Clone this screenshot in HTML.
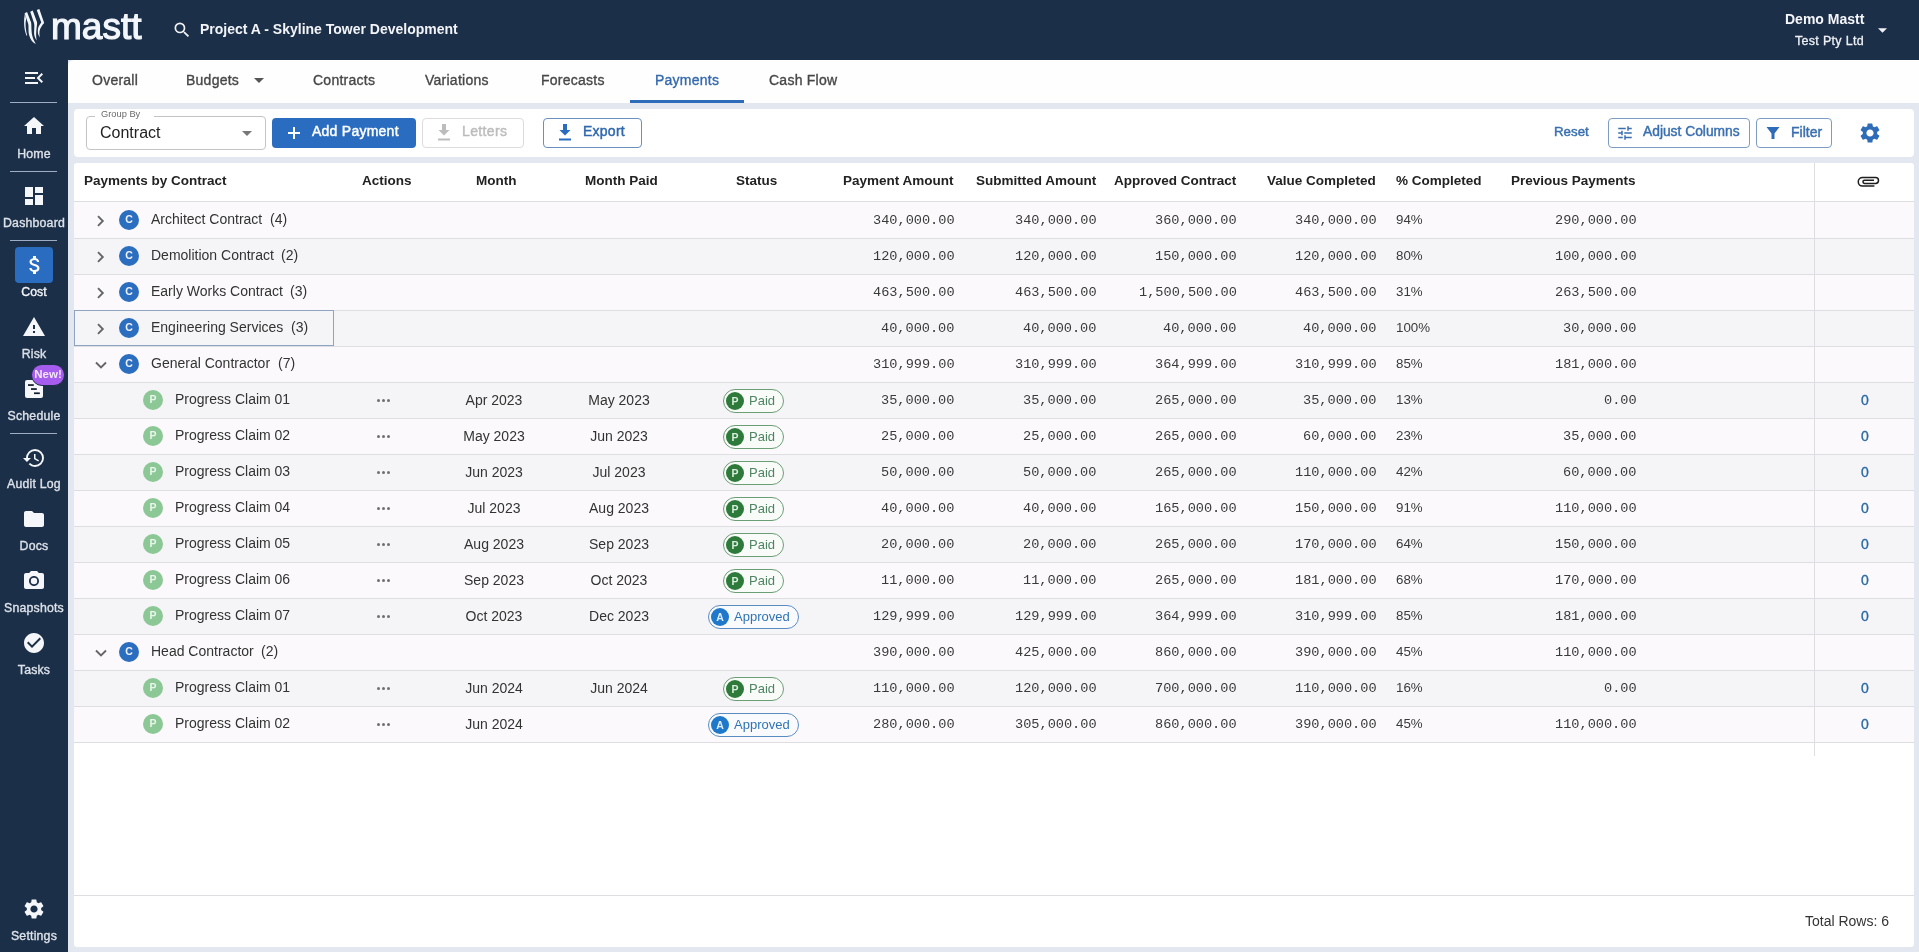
<!DOCTYPE html>
<html><head><meta charset="utf-8"><title>Payments</title>
<style>
html,body{margin:0;padding:0}
body{width:1919px;height:952px;overflow:hidden;position:relative;background:#e2e7f0;font-family:'Liberation Sans', sans-serif}
.t{position:absolute;white-space:nowrap;will-change:transform}
.b{position:absolute;box-sizing:border-box}
svg.b{display:block}
</style></head><body>
<div class="b" style="left:0px;top:0px;width:1919px;height:60px;background:#1c2f48"></div>
<div class="b" style="left:0px;top:60px;width:68px;height:892px;background:#1c2f48"></div>
<svg class="b" style="left:20px;top:6px" width="30" height="42" viewBox="0 0 680 952" fill="#f3f6fb">
<path d="M105 165 L160 138 L250 370 C265 420 250 560 280 680 C300 760 330 810 360 860 C290 830 230 760 205 650 C185 560 200 450 185 400 Z"/>
<path d="M112 170 C80 330 85 530 150 675 L165 665 C120 520 120 360 140 300 Z"/>
<path d="M232 130 L288 100 L385 360 C395 400 372 500 367 600 C362 680 370 730 377 780 C330 720 315 650 320 580 C325 480 330 420 315 380 Z"/>
<path d="M380 92 L438 66 L548 385 C500 440 452 500 442 580 C437 640 445 680 452 712 C405 660 400 600 405 540 C410 470 450 420 482 375 Z"/>
</svg>
<div class="t" style="top:2.67px;font-size:37px;line-height:48px;font-weight:400;color:#f3f6fb;font-family:'Liberation Sans', sans-serif;-webkit-text-stroke:1.2px #f3f6fb;left:50.5px;">mastt</div>
<svg class="b" style="left:172px;top:20px" width="20" height="20" viewBox="0 0 24 24"><path fill="#f0f2f6" d="M15.5 14h-.79l-.28-.27A6.47 6.47 0 0 0 16 9.5 6.5 6.5 0 1 0 9.5 16c1.61 0 3.09-.59 4.23-1.57l.27.28v.79l5 4.99L20.49 19l-4.99-5zm-6 0C7.01 14 5 11.99 5 9.5S7.01 5 9.5 5 14 7.01 14 9.5 11.99 14 9.5 14z"/></svg>
<div class="t" style="top:20.15px;font-size:14px;line-height:18px;font-weight:700;color:#f2f4f8;font-family:'Liberation Sans', sans-serif;left:200px;">Project A - Skyline Tower Development</div>
<div class="t" style="top:10.15px;font-size:14px;line-height:18px;font-weight:700;color:#f4f6fa;font-family:'Liberation Sans', sans-serif;right:55px;">Demo Mastt</div>
<div class="t" style="top:33.17px;font-size:12.5px;line-height:16px;font-weight:400;color:#eef1f6;font-family:'Liberation Sans', sans-serif;-webkit-text-stroke:0.3px #eef1f6;letter-spacing:0.3px;right:55px;">Test Pty Ltd</div>
<svg class="b" style="left:1877.5px;top:27.5px" width="9" height="5" viewBox="0 0 10 5"><path d="M0 0h10L5 5z" fill="#f0f2f6"/></svg>
<svg class="b" style="left:22px;top:66px" width="24" height="24" viewBox="0 0 24 24"><path fill="#f4f6fa" d="M3 18h13v-2H3v2zm0-5h10v-2H3v2zm0-7v2h13V6H3zm18 9.59L17.42 12 21 8.41 19.59 7l-5 5 5 5L21 15.59z"/></svg>
<div class="b" style="left:10px;top:102px;width:47px;height:1px;background:#9eadc4"></div>
<div class="b" style="left:10px;top:171px;width:47px;height:1px;background:#9eadc4"></div>
<div class="b" style="left:10px;top:240px;width:47px;height:1px;background:#9eadc4"></div>
<div class="b" style="left:10px;top:433px;width:47px;height:1px;background:#9eadc4"></div>
<svg class="b" style="left:22px;top:114px" width="24" height="24" viewBox="0 0 24 24" fill="#f4f6fa"><path d="M10 20v-6h4v6h5v-8h3L12 3 2 12h3v8z"/></svg>
<div class="t" style="top:145.74px;font-size:12.3px;line-height:16px;font-weight:400;color:#dde2ea;font-family:'Liberation Sans', sans-serif;-webkit-text-stroke:0.35px #dde2ea;letter-spacing:0.2px;left:-266px;width:600px;text-align:center;">Home</div>
<svg class="b" style="left:22px;top:184px" width="24" height="24" viewBox="0 0 24 24" fill="#f4f6fa"><path d="M3 13h8V3H3v10zm0 8h8v-6H3v6zm10 0h8V11h-8v10zm0-18v6h8V3h-8z"/></svg>
<div class="t" style="top:215.24px;font-size:12.3px;line-height:16px;font-weight:400;color:#dde2ea;font-family:'Liberation Sans', sans-serif;-webkit-text-stroke:0.35px #dde2ea;letter-spacing:0.2px;left:-266px;width:600px;text-align:center;">Dashboard</div>
<div class="b" style="left:15px;top:247px;width:38px;height:36px;background:#2a6cbf;border-radius:4px"></div>
<svg class="b" style="left:23px;top:253px" width="24" height="24" viewBox="0 0 24 24"><path fill="#fff" d="M11.8 10.9c-2.27-.59-3-1.2-3-2.15 0-1.09 1.01-1.850 2.7-1.85 1.78 0 2.44.85 2.5 2.1h2.21c-.07-1.72-1.12-3.3-3.21-3.81V3h-3v2.16c-1.94.42-3.5 1.68-3.5 3.61 0 2.31 1.91 3.46 4.7 4.13 2.5.6 3 1.48 3 2.410 0 .69-.49 1.79-2.7 1.79-2.06 0-2.87-.92-2.98-2.1h-2.2c.12 2.19 1.76 3.42 3.68 3.830V21h3v-2.15c1.95-.37 3.5-1.5 3.5-3.55 0-2.84-2.43-3.81-4.7-4.4z"/></svg>
<div class="t" style="top:283.74px;font-size:12.3px;line-height:16px;font-weight:400;color:#f4f6fa;font-family:'Liberation Sans', sans-serif;-webkit-text-stroke:0.35px #f4f6fa;left:-266px;width:600px;text-align:center;">Cost</div>
<svg class="b" style="left:22px;top:315px" width="24" height="24" viewBox="0 0 24 24" fill="#f4f6fa"><path d="M1 21h22L12 2 1 21zm12-3h-2v-2h2v2zm0-4h-2v-4h2v4z"/></svg>
<div class="t" style="top:345.74px;font-size:12.3px;line-height:16px;font-weight:400;color:#dde2ea;font-family:'Liberation Sans', sans-serif;-webkit-text-stroke:0.35px #dde2ea;letter-spacing:0.2px;left:-266px;width:600px;text-align:center;">Risk</div>
<svg class="b" style="left:25px;top:380px" width="18" height="18" viewBox="0 0 18 18"><rect x="0" y="0" width="18" height="18" rx="2" fill="#f4f6fa"/><rect x="3" y="4.2" width="5.8" height="1.7" fill="#111a28"/><rect x="6" y="8.2" width="5.8" height="1.7" fill="#111a28"/><rect x="9" y="12.4" width="5.8" height="1.7" fill="#111a28"/></svg>
<div class="b" style="left:31px;top:364px;width:34px;height:22px;background:#a65ded;border-radius:11px;border:1.5px solid #1c2f48"></div>
<div class="t" style="top:366.81px;font-size:11.5px;line-height:15px;font-weight:700;color:#f3e6fb;font-family:'Liberation Sans', sans-serif;left:-252px;width:600px;text-align:center;">New!</div>
<div class="t" style="top:408.04px;font-size:12.3px;line-height:16px;font-weight:400;color:#dde2ea;font-family:'Liberation Sans', sans-serif;-webkit-text-stroke:0.35px #dde2ea;letter-spacing:0.2px;left:-266px;width:600px;text-align:center;">Schedule</div>
<svg class="b" style="left:22px;top:446px" width="24" height="24" viewBox="0 0 24 24" fill="#f4f6fa"><path d="M13 3a9 9 0 0 0-9 9H1l3.89 3.89.07.14L9 12H6c0-3.87 3.13-7 7-7s7 3.13 7 7-3.13 7-7 7c-1.93 0-3.68-.79-4.94-2.06l-1.42 1.42A8.954 8.954 0 0 0 13 21a9 9 0 0 0 0-18zm-1 5v5l4.28 2.54.72-1.21-3.5-2.08V8H12z"/></svg>
<div class="t" style="top:476.44px;font-size:12.3px;line-height:16px;font-weight:400;color:#dde2ea;font-family:'Liberation Sans', sans-serif;-webkit-text-stroke:0.35px #dde2ea;letter-spacing:0.2px;left:-266px;width:600px;text-align:center;">Audit Log</div>
<svg class="b" style="left:22px;top:507px" width="24" height="24" viewBox="0 0 24 24" fill="#f4f6fa"><path d="M10 4H4c-1.1 0-1.99.9-1.99 2L2 18c0 1.1.9 2 2 2h16c1.1 0 2-.9 2-2V8c0-1.1-.9-2-2-2h-8l-2-2z"/></svg>
<div class="t" style="top:537.74px;font-size:12.3px;line-height:16px;font-weight:400;color:#dde2ea;font-family:'Liberation Sans', sans-serif;-webkit-text-stroke:0.35px #dde2ea;letter-spacing:0.2px;left:-266px;width:600px;text-align:center;">Docs</div>
<svg class="b" style="left:22px;top:568px" width="24" height="24" viewBox="0 0 24 24" fill="#f4f6fa"><path d="M20 5h-3.17L15 3H9L7.17 5H4c-1.1 0-2 .9-2 2v12c0 1.1.9 2 2 2h16c1.1 0 2-.9 2-2V7c0-1.1-.9-2-2-2zm-8 13c-2.76 0-5-2.24-5-5s2.24-5 5-5 5 2.24 5 5-2.24 5-5 5z"/><circle cx="12" cy="13" r="3.2"/></svg>
<div class="t" style="top:600.24px;font-size:12.3px;line-height:16px;font-weight:400;color:#dde2ea;font-family:'Liberation Sans', sans-serif;-webkit-text-stroke:0.35px #dde2ea;letter-spacing:0.2px;left:-266px;width:600px;text-align:center;">Snapshots</div>
<svg class="b" style="left:22px;top:631px" width="24" height="24" viewBox="0 0 24 24" fill="#f4f6fa"><path d="M12 2C6.48 2 2 6.48 2 12s4.48 10 10 10 10-4.48 10-10S17.52 2 12 2zm-2 15l-5-5 1.41-1.41L10 14.17l7.59-7.59L19 8l-9 9z"/></svg>
<div class="t" style="top:662.24px;font-size:12.3px;line-height:16px;font-weight:400;color:#dde2ea;font-family:'Liberation Sans', sans-serif;-webkit-text-stroke:0.35px #dde2ea;letter-spacing:0.2px;left:-266px;width:600px;text-align:center;">Tasks</div>
<svg class="b" style="left:22px;top:897px" width="24" height="24" viewBox="0 0 24 24" fill="#f4f6fa"><path d="M19.14 12.94c.04-.3.06-.61.06-.94 0-.32-.02-.64-.07-.94l2.03-1.58a.49.49 0 0 0 .12-.61l-1.92-3.32a.488.488 0 0 0-.59-.22l-2.39.96c-.5-.38-1.03-.7-1.62-.94l-.36-2.54a.484.484 0 0 0-.48-.41h-3.84c-.24 0-.43.17-.47.41l-.36 2.54c-.59.24-1.13.57-1.62.94l-2.39-.96c-.22-.08-.47 0-.59.22L2.74 8.87c-.12.21-.08.47.12.61l2.03 1.58c-.05.3-.09.63-.09.94s.02.64.07.94l-2.03 1.58a.49.49 0 0 0-.12.61l1.92 3.32c.12.22.37.29.59.22l2.39-.96c.5.38 1.03.7 1.62.94l.36 2.54c.05.24.24.41.48.41h3.84c.24 0 .44-.17.47-.41l.36-2.54c.59-.24 1.13-.56 1.62-.94l2.39.96c.22.08.47 0 .59-.22l1.92-3.32c.12-.22.07-.47-.12-.61l-2.01-1.58zM12 15.6c-1.98 0-3.6-1.62-3.6-3.6s1.62-3.6 3.6-3.6 3.6 1.62 3.6 3.6-1.62 3.6-3.6 3.6z"/></svg>
<div class="t" style="top:928.14px;font-size:12.3px;line-height:16px;font-weight:400;color:#dde2ea;font-family:'Liberation Sans', sans-serif;-webkit-text-stroke:0.35px #dde2ea;letter-spacing:0.2px;left:-266px;width:600px;text-align:center;">Settings</div>
<div class="b" style="left:68px;top:60px;width:1851px;height:43px;background:#fefefe;border-top-left-radius:6px"></div>
<div class="t" style="top:71.15px;font-size:14px;line-height:18px;font-weight:400;color:#474747;font-family:'Liberation Sans', sans-serif;-webkit-text-stroke:0.35px #474747;letter-spacing:0.25px;left:92px;">Overall</div>
<div class="t" style="top:71.15px;font-size:14px;line-height:18px;font-weight:400;color:#474747;font-family:'Liberation Sans', sans-serif;-webkit-text-stroke:0.35px #474747;letter-spacing:0.25px;left:186px;">Budgets</div>
<div class="t" style="top:71.15px;font-size:14px;line-height:18px;font-weight:400;color:#474747;font-family:'Liberation Sans', sans-serif;-webkit-text-stroke:0.35px #474747;letter-spacing:0.25px;left:312.5px;">Contracts</div>
<div class="t" style="top:71.15px;font-size:14px;line-height:18px;font-weight:400;color:#474747;font-family:'Liberation Sans', sans-serif;-webkit-text-stroke:0.35px #474747;letter-spacing:0.25px;left:425px;">Variations</div>
<div class="t" style="top:71.15px;font-size:14px;line-height:18px;font-weight:400;color:#474747;font-family:'Liberation Sans', sans-serif;-webkit-text-stroke:0.35px #474747;letter-spacing:0.25px;left:541px;">Forecasts</div>
<div class="t" style="top:71.15px;font-size:14px;line-height:18px;font-weight:400;color:#474747;font-family:'Liberation Sans', sans-serif;-webkit-text-stroke:0.35px #474747;letter-spacing:0.25px;left:768.5px;">Cash Flow</div>
<svg class="b" style="left:254px;top:78px" width="10" height="5" viewBox="0 0 10 5"><path d="M0 0h10L5 5z" fill="#555"/></svg>
<div class="t" style="top:71.15px;font-size:14px;line-height:18px;font-weight:400;color:#3469ad;font-family:'Liberation Sans', sans-serif;-webkit-text-stroke:0.35px #3469ad;letter-spacing:0.25px;left:654.5px;">Payments</div>
<div class="b" style="left:630px;top:100px;width:114px;height:3px;background:#2c6cb9"></div>
<div class="b" style="left:74px;top:109px;width:1840px;height:48px;background:#fff;border-radius:4px"></div>
<div class="b" style="left:86px;top:116px;width:180px;height:34px;border:1px solid #c4c4c4;border-radius:4px"></div>
<div class="b" style="left:95px;top:112px;width:59px;height:8px;background:#fff"></div>
<div class="t" style="top:108.08px;font-size:9.3px;line-height:12px;font-weight:400;color:#6a6a6a;font-family:'Liberation Sans', sans-serif;left:100.5px;">Group By</div>
<div class="t" style="top:121.65px;font-size:16px;line-height:21px;font-weight:400;color:#222;font-family:'Liberation Sans', sans-serif;left:100px;">Contract</div>
<svg class="b" style="left:242px;top:131px" width="10" height="5" viewBox="0 0 10 5"><path d="M0 0h10L5 5z" fill="#777"/></svg>
<div class="b" style="left:272px;top:118px;width:144px;height:30px;background:#2a6cbf;border-radius:4px"></div>
<svg class="b" style="left:287px;top:126px" width="14" height="14" viewBox="0 0 14 14"><path d="M6 1h2v5h5v2H8v5H6V8H1V6h5z" fill="#fff"/></svg>
<div class="t" style="top:122.25px;font-size:14px;line-height:18px;font-weight:400;color:#fff;font-family:'Liberation Sans', sans-serif;-webkit-text-stroke:0.45px #fff;letter-spacing:0.25px;left:312px;">Add Payment</div>
<div class="b" style="left:422px;top:118px;width:102px;height:30px;border:1px solid #dcdcdc;border-radius:4px;box-sizing:border-box"></div>
<svg class="b" style="left:437px;top:124px" width="14" height="17" viewBox="0 0 14 17"><path d="M5 0h4v6h3.5L7 11.5 1.5 6H5z M1 14.5h12v2H1z" fill="#bdbdbd"/></svg>
<div class="t" style="top:122.25px;font-size:14px;line-height:18px;font-weight:400;color:#bcbcbc;font-family:'Liberation Sans', sans-serif;-webkit-text-stroke:0.45px #bcbcbc;letter-spacing:0.35px;left:462px;">Letters</div>
<div class="b" style="left:543px;top:118px;width:99px;height:30px;border:1px solid #6b8fbf;border-radius:4px;box-sizing:border-box"></div>
<svg class="b" style="left:558px;top:124px" width="14" height="17" viewBox="0 0 14 17"><path d="M5 0h4v6h3.5L7 11.5 1.5 6H5z M1 14.5h12v2H1z" fill="#2a6cbf"/></svg>
<div class="t" style="top:122.25px;font-size:14px;line-height:18px;font-weight:400;color:#3068ad;font-family:'Liberation Sans', sans-serif;-webkit-text-stroke:0.45px #3068ad;letter-spacing:0.25px;left:583px;">Export</div>
<div class="t" style="top:122.99px;font-size:13.3px;line-height:17px;font-weight:400;color:#3a70b0;font-family:'Liberation Sans', sans-serif;-webkit-text-stroke:0.45px #3a70b0;left:1553.5px;">Reset</div>
<div class="b" style="left:1608px;top:118px;width:142px;height:30px;border:1px solid #7d9cc4;border-radius:4px;box-sizing:border-box"></div>
<svg class="b" style="left:1616px;top:124px" width="18" height="18" viewBox="0 0 24 24"><path fill="#3a6fb0" d="M3 17v2h6v-2H3zM3 5v2h10V5H3zm10 16v-2h8v-2h-8v-2h-2v6h2zM7 9v2H3v2h4v2h2V9H7zm14 4v-2H11v2h10zm-6-4h2V7h4V5h-4V3h-2v6z"/></svg>
<div class="t" style="top:123.32px;font-size:13.8px;line-height:18px;font-weight:400;color:#3a6fb0;font-family:'Liberation Sans', sans-serif;-webkit-text-stroke:0.45px #3a6fb0;left:1643px;">Adjust Columns</div>
<div class="b" style="left:1756px;top:118px;width:76px;height:30px;border:1px solid #7d9cc4;border-radius:4px;box-sizing:border-box"></div>
<svg class="b" style="left:1766px;top:126px" width="14" height="14" viewBox="0 0 14 14"><path d="M0.5 1h13L8.5 7.5V13h-3V7.5z" fill="#2f6cb8"/></svg>
<div class="t" style="top:122.95px;font-size:14px;line-height:18px;font-weight:400;color:#3a6fb0;font-family:'Liberation Sans', sans-serif;-webkit-text-stroke:0.45px #3a6fb0;left:1790.5px;">Filter</div>
<svg class="b" style="left:1858px;top:121px" width="24" height="24" viewBox="0 0 24 24" fill="#2f6cb8"><path d="M19.14 12.94c.04-.3.06-.61.06-.94 0-.32-.02-.64-.07-.94l2.03-1.58a.49.49 0 0 0 .12-.61l-1.92-3.32a.488.488 0 0 0-.59-.22l-2.39.96c-.5-.38-1.03-.7-1.62-.94l-.36-2.54a.484.484 0 0 0-.48-.41h-3.84c-.24 0-.43.17-.47.41l-.36 2.54c-.59.24-1.13.57-1.62.94l-2.39-.96c-.22-.08-.47 0-.59.22L2.74 8.87c-.12.21-.08.47.12.61l2.03 1.58c-.05.3-.09.63-.09.94s.02.64.07.94l-2.03 1.58a.49.49 0 0 0-.12.61l1.92 3.32c.12.22.37.29.59.22l2.39-.96c.5.38 1.03.7 1.62.94l.36 2.54c.05.24.24.41.48.41h3.84c.24 0 .44-.17.47-.41l.36-2.54c.59-.24 1.13-.56 1.62-.94l2.39.96c.22.08.47 0 .59-.22l1.92-3.32c.12-.22.07-.47-.12-.61l-2.01-1.58zM12 15.6c-1.98 0-3.6-1.62-3.6-3.6s1.62-3.6 3.6-3.6 3.6 1.62 3.6 3.6-1.62 3.6-3.6 3.6z"/></svg>
<div class="b" style="left:74px;top:163px;width:1840px;height:784px;background:#fff;border-radius:3px"></div>
<div class="b" style="left:74px;top:201px;width:1840px;height:1px;background:#dedde2"></div>
<div class="t" style="top:172.32px;font-size:13.5px;line-height:18px;font-weight:700;color:#222;font-family:'Liberation Sans', sans-serif;left:84px;">Payments by Contract</div>
<div class="t" style="top:172.32px;font-size:13.5px;line-height:18px;font-weight:700;color:#222;font-family:'Liberation Sans', sans-serif;left:362px;">Actions</div>
<div class="t" style="top:172.32px;font-size:13.5px;line-height:18px;font-weight:700;color:#222;font-family:'Liberation Sans', sans-serif;left:476px;">Month</div>
<div class="t" style="top:172.32px;font-size:13.5px;line-height:18px;font-weight:700;color:#222;font-family:'Liberation Sans', sans-serif;left:585px;">Month Paid</div>
<div class="t" style="top:172.32px;font-size:13.5px;line-height:18px;font-weight:700;color:#222;font-family:'Liberation Sans', sans-serif;left:736px;">Status</div>
<div class="t" style="top:172.32px;font-size:13.5px;line-height:18px;font-weight:700;color:#222;font-family:'Liberation Sans', sans-serif;right:965px;">Payment Amount</div>
<div class="t" style="top:172.32px;font-size:13.5px;line-height:18px;font-weight:700;color:#222;font-family:'Liberation Sans', sans-serif;right:823px;">Submitted Amount</div>
<div class="t" style="top:172.32px;font-size:13.5px;line-height:18px;font-weight:700;color:#222;font-family:'Liberation Sans', sans-serif;right:683px;">Approved Contract</div>
<div class="t" style="top:172.32px;font-size:13.5px;line-height:18px;font-weight:700;color:#222;font-family:'Liberation Sans', sans-serif;right:543px;">Value Completed</div>
<div class="t" style="top:172.32px;font-size:13.5px;line-height:18px;font-weight:700;color:#222;font-family:'Liberation Sans', sans-serif;left:1396px;">% Completed</div>
<div class="t" style="top:172.32px;font-size:13.5px;line-height:18px;font-weight:700;color:#222;font-family:'Liberation Sans', sans-serif;right:283px;">Previous Payments</div>
<svg class="b" style="left:1857px;top:176px" width="23" height="12" viewBox="1857 176 23 12"><path d="M1874.4 186.1H1862.5A4.25 4.25 0 0 1 1862.5 177.6H1875.6A2.9 2.9 0 0 1 1875.6 183.4H1864.5A1.55 1.55 0 0 1 1864.5 180.3H1874" fill="none" stroke="#1e1e1e" stroke-width="1.5"/></svg>
<div class="b" style="left:74px;top:202px;width:1840px;height:36px;background:#fbf9fc"></div>
<div class="b" style="left:74px;top:238px;width:1840px;height:1px;background:#dedde2"></div>
<svg class="b" style="left:96px;top:215px" width="10" height="12" viewBox="0 0 10 12"><path d="M2 1.2 L6.8 6 L2 10.8" stroke="#666" stroke-width="1.9" fill="none"/></svg>
<div class="b" style="left:119px;top:210px;width:20px;height:20px;background:#2b6dbf;border-radius:50%"></div>
<div class="t" style="top:212.36px;font-size:10.5px;line-height:14px;font-weight:700;color:#eef3fb;font-family:'Liberation Sans', sans-serif;left:-171px;width:600px;text-align:center;">C</div>
<div class="t" style="top:210.15px;font-size:14px;line-height:18px;font-weight:400;color:#333;font-family:'Liberation Sans', sans-serif;left:151px;">Architect Contract</div>
<div class="t" style="top:210.15px;font-size:14px;line-height:18px;font-weight:400;color:#333;font-family:'Liberation Sans', sans-serif;left:269.76171875px;">(4)</div>
<div class="t" style="top:211.88px;font-size:13.6px;line-height:18px;font-weight:400;color:#3a3a3a;font-family:'Liberation Mono', monospace;right:964.5px;">340,000.00</div>
<div class="t" style="top:211.88px;font-size:13.6px;line-height:18px;font-weight:400;color:#3a3a3a;font-family:'Liberation Mono', monospace;right:822.5px;">340,000.00</div>
<div class="t" style="top:211.88px;font-size:13.6px;line-height:18px;font-weight:400;color:#3a3a3a;font-family:'Liberation Mono', monospace;right:682.5px;">360,000.00</div>
<div class="t" style="top:211.88px;font-size:13.6px;line-height:18px;font-weight:400;color:#3a3a3a;font-family:'Liberation Mono', monospace;right:542.5px;">340,000.00</div>
<div class="t" style="top:211.88px;font-size:13.6px;line-height:18px;font-weight:400;color:#3a3a3a;font-family:'Liberation Mono', monospace;right:282.5px;">290,000.00</div>
<div class="t" style="top:210.89px;font-size:13.3px;line-height:17px;font-weight:400;color:#3a3a3a;font-family:'Liberation Sans', sans-serif;left:1396px;">94%</div>
<div class="b" style="left:74px;top:239px;width:1840px;height:35px;background:#f5f4f7"></div>
<div class="b" style="left:74px;top:274px;width:1840px;height:1px;background:#dedde2"></div>
<svg class="b" style="left:96px;top:251px" width="10" height="12" viewBox="0 0 10 12"><path d="M2 1.2 L6.8 6 L2 10.8" stroke="#666" stroke-width="1.9" fill="none"/></svg>
<div class="b" style="left:119px;top:246px;width:20px;height:20px;background:#2b6dbf;border-radius:50%"></div>
<div class="t" style="top:248.36px;font-size:10.5px;line-height:14px;font-weight:700;color:#eef3fb;font-family:'Liberation Sans', sans-serif;left:-171px;width:600px;text-align:center;">C</div>
<div class="t" style="top:246.15px;font-size:14px;line-height:18px;font-weight:400;color:#333;font-family:'Liberation Sans', sans-serif;left:151px;">Demolition Contract</div>
<div class="t" style="top:246.15px;font-size:14px;line-height:18px;font-weight:400;color:#333;font-family:'Liberation Sans', sans-serif;left:281.4375px;">(2)</div>
<div class="t" style="top:247.88px;font-size:13.6px;line-height:18px;font-weight:400;color:#3a3a3a;font-family:'Liberation Mono', monospace;right:964.5px;">120,000.00</div>
<div class="t" style="top:247.88px;font-size:13.6px;line-height:18px;font-weight:400;color:#3a3a3a;font-family:'Liberation Mono', monospace;right:822.5px;">120,000.00</div>
<div class="t" style="top:247.88px;font-size:13.6px;line-height:18px;font-weight:400;color:#3a3a3a;font-family:'Liberation Mono', monospace;right:682.5px;">150,000.00</div>
<div class="t" style="top:247.88px;font-size:13.6px;line-height:18px;font-weight:400;color:#3a3a3a;font-family:'Liberation Mono', monospace;right:542.5px;">120,000.00</div>
<div class="t" style="top:247.88px;font-size:13.6px;line-height:18px;font-weight:400;color:#3a3a3a;font-family:'Liberation Mono', monospace;right:282.5px;">100,000.00</div>
<div class="t" style="top:246.89px;font-size:13.3px;line-height:17px;font-weight:400;color:#3a3a3a;font-family:'Liberation Sans', sans-serif;left:1396px;">80%</div>
<div class="b" style="left:74px;top:275px;width:1840px;height:35px;background:#fbf9fc"></div>
<div class="b" style="left:74px;top:310px;width:1840px;height:1px;background:#dedde2"></div>
<svg class="b" style="left:96px;top:287px" width="10" height="12" viewBox="0 0 10 12"><path d="M2 1.2 L6.8 6 L2 10.8" stroke="#666" stroke-width="1.9" fill="none"/></svg>
<div class="b" style="left:119px;top:282px;width:20px;height:20px;background:#2b6dbf;border-radius:50%"></div>
<div class="t" style="top:284.36px;font-size:10.5px;line-height:14px;font-weight:700;color:#eef3fb;font-family:'Liberation Sans', sans-serif;left:-171px;width:600px;text-align:center;">C</div>
<div class="t" style="top:282.15px;font-size:14px;line-height:18px;font-weight:400;color:#333;font-family:'Liberation Sans', sans-serif;left:151px;">Early Works Contract</div>
<div class="t" style="top:282.15px;font-size:14px;line-height:18px;font-weight:400;color:#333;font-family:'Liberation Sans', sans-serif;left:290.4951171875px;">(3)</div>
<div class="t" style="top:283.88px;font-size:13.6px;line-height:18px;font-weight:400;color:#3a3a3a;font-family:'Liberation Mono', monospace;right:964.5px;">463,500.00</div>
<div class="t" style="top:283.88px;font-size:13.6px;line-height:18px;font-weight:400;color:#3a3a3a;font-family:'Liberation Mono', monospace;right:822.5px;">463,500.00</div>
<div class="t" style="top:283.88px;font-size:13.6px;line-height:18px;font-weight:400;color:#3a3a3a;font-family:'Liberation Mono', monospace;right:682.5px;">1,500,500.00</div>
<div class="t" style="top:283.88px;font-size:13.6px;line-height:18px;font-weight:400;color:#3a3a3a;font-family:'Liberation Mono', monospace;right:542.5px;">463,500.00</div>
<div class="t" style="top:283.88px;font-size:13.6px;line-height:18px;font-weight:400;color:#3a3a3a;font-family:'Liberation Mono', monospace;right:282.5px;">263,500.00</div>
<div class="t" style="top:282.89px;font-size:13.3px;line-height:17px;font-weight:400;color:#3a3a3a;font-family:'Liberation Sans', sans-serif;left:1396px;">31%</div>
<div class="b" style="left:74px;top:311px;width:1840px;height:35px;background:#f5f4f7"></div>
<div class="b" style="left:74px;top:346px;width:1840px;height:1px;background:#dedde2"></div>
<svg class="b" style="left:96px;top:323px" width="10" height="12" viewBox="0 0 10 12"><path d="M2 1.2 L6.8 6 L2 10.8" stroke="#666" stroke-width="1.9" fill="none"/></svg>
<div class="b" style="left:119px;top:318px;width:20px;height:20px;background:#2b6dbf;border-radius:50%"></div>
<div class="t" style="top:320.36px;font-size:10.5px;line-height:14px;font-weight:700;color:#eef3fb;font-family:'Liberation Sans', sans-serif;left:-171px;width:600px;text-align:center;">C</div>
<div class="t" style="top:318.15px;font-size:14px;line-height:18px;font-weight:400;color:#333;font-family:'Liberation Sans', sans-serif;left:151px;">Engineering Services</div>
<div class="t" style="top:318.15px;font-size:14px;line-height:18px;font-weight:400;color:#333;font-family:'Liberation Sans', sans-serif;left:290.7958984375px;">(3)</div>
<div class="t" style="top:319.88px;font-size:13.6px;line-height:18px;font-weight:400;color:#3a3a3a;font-family:'Liberation Mono', monospace;right:964.5px;">40,000.00</div>
<div class="t" style="top:319.88px;font-size:13.6px;line-height:18px;font-weight:400;color:#3a3a3a;font-family:'Liberation Mono', monospace;right:822.5px;">40,000.00</div>
<div class="t" style="top:319.88px;font-size:13.6px;line-height:18px;font-weight:400;color:#3a3a3a;font-family:'Liberation Mono', monospace;right:682.5px;">40,000.00</div>
<div class="t" style="top:319.88px;font-size:13.6px;line-height:18px;font-weight:400;color:#3a3a3a;font-family:'Liberation Mono', monospace;right:542.5px;">40,000.00</div>
<div class="t" style="top:319.88px;font-size:13.6px;line-height:18px;font-weight:400;color:#3a3a3a;font-family:'Liberation Mono', monospace;right:282.5px;">30,000.00</div>
<div class="t" style="top:318.89px;font-size:13.3px;line-height:17px;font-weight:400;color:#3a3a3a;font-family:'Liberation Sans', sans-serif;left:1396px;">100%</div>
<div class="b" style="left:74px;top:347px;width:1840px;height:35px;background:#fbf9fc"></div>
<div class="b" style="left:74px;top:382px;width:1840px;height:1px;background:#dedde2"></div>
<svg class="b" style="left:95px;top:361px" width="12" height="9" viewBox="0 0 12 9"><path d="M1 1.5 L6 6.5 L11 1.5" stroke="#666" stroke-width="1.9" fill="none"/></svg>
<div class="b" style="left:119px;top:354px;width:20px;height:20px;background:#2b6dbf;border-radius:50%"></div>
<div class="t" style="top:356.36px;font-size:10.5px;line-height:14px;font-weight:700;color:#eef3fb;font-family:'Liberation Sans', sans-serif;left:-171px;width:600px;text-align:center;">C</div>
<div class="t" style="top:354.15px;font-size:14px;line-height:18px;font-weight:400;color:#333;font-family:'Liberation Sans', sans-serif;left:151px;">General Contractor</div>
<div class="t" style="top:354.15px;font-size:14px;line-height:18px;font-weight:400;color:#333;font-family:'Liberation Sans', sans-serif;left:277.5546875px;">(7)</div>
<div class="t" style="top:355.88px;font-size:13.6px;line-height:18px;font-weight:400;color:#3a3a3a;font-family:'Liberation Mono', monospace;right:964.5px;">310,999.00</div>
<div class="t" style="top:355.88px;font-size:13.6px;line-height:18px;font-weight:400;color:#3a3a3a;font-family:'Liberation Mono', monospace;right:822.5px;">310,999.00</div>
<div class="t" style="top:355.88px;font-size:13.6px;line-height:18px;font-weight:400;color:#3a3a3a;font-family:'Liberation Mono', monospace;right:682.5px;">364,999.00</div>
<div class="t" style="top:355.88px;font-size:13.6px;line-height:18px;font-weight:400;color:#3a3a3a;font-family:'Liberation Mono', monospace;right:542.5px;">310,999.00</div>
<div class="t" style="top:355.88px;font-size:13.6px;line-height:18px;font-weight:400;color:#3a3a3a;font-family:'Liberation Mono', monospace;right:282.5px;">181,000.00</div>
<div class="t" style="top:354.89px;font-size:13.3px;line-height:17px;font-weight:400;color:#3a3a3a;font-family:'Liberation Sans', sans-serif;left:1396px;">85%</div>
<div class="b" style="left:74px;top:383px;width:1840px;height:35px;background:#f5f4f7"></div>
<div class="b" style="left:74px;top:418px;width:1840px;height:1px;background:#dedde2"></div>
<div class="b" style="left:143px;top:390px;width:20px;height:20px;background:#8cc895;border-radius:50%"></div>
<div class="t" style="top:392.36px;font-size:10.5px;line-height:14px;font-weight:700;color:#eaf6ec;font-family:'Liberation Sans', sans-serif;left:-147px;width:600px;text-align:center;">P</div>
<div class="t" style="top:390.15px;font-size:14px;line-height:18px;font-weight:400;color:#333;font-family:'Liberation Sans', sans-serif;left:175px;">Progress Claim 01</div>
<div class="b" style="left:377.3px;top:399.2px;width:3.2px;height:3.2px;background:#707070;border-radius:50%"></div>
<div class="b" style="left:382.3px;top:399.2px;width:3.2px;height:3.2px;background:#707070;border-radius:50%"></div>
<div class="b" style="left:387.3px;top:399.2px;width:3.2px;height:3.2px;background:#707070;border-radius:50%"></div>
<div class="t" style="top:391.15px;font-size:14px;line-height:18px;font-weight:400;color:#333;font-family:'Liberation Sans', sans-serif;left:193.5px;width:600px;text-align:center;">Apr 2023</div>
<div class="t" style="top:391.15px;font-size:14px;line-height:18px;font-weight:400;color:#333;font-family:'Liberation Sans', sans-serif;left:318.5px;width:600px;text-align:center;">May 2023</div>
<div class="b" style="left:723px;top:389px;width:61px;height:24px;border:1px solid #6a9e74;border-radius:12px;box-sizing:border-box;background:#f9fbf9"></div>
<div class="b" style="left:726px;top:392px;width:18px;height:18px;background:#2d7a3a;border-radius:50%"></div>
<div class="t" style="top:394.36px;font-size:10.5px;line-height:14px;font-weight:700;color:#d8eedc;font-family:'Liberation Sans', sans-serif;left:435px;width:600px;text-align:center;">P</div>
<div class="t" style="top:391.99px;font-size:13px;line-height:17px;font-weight:400;color:#4f8463;font-family:'Liberation Sans', sans-serif;left:749px;">Paid</div>
<div class="t" style="top:390.65px;font-size:14px;line-height:18px;font-weight:400;color:#2a69a6;font-family:'Liberation Sans', sans-serif;-webkit-text-stroke:0.35px #2a69a6;left:1564.5px;width:600px;text-align:center;">0</div>
<div class="t" style="top:391.88px;font-size:13.6px;line-height:18px;font-weight:400;color:#3a3a3a;font-family:'Liberation Mono', monospace;right:964.5px;">35,000.00</div>
<div class="t" style="top:391.88px;font-size:13.6px;line-height:18px;font-weight:400;color:#3a3a3a;font-family:'Liberation Mono', monospace;right:822.5px;">35,000.00</div>
<div class="t" style="top:391.88px;font-size:13.6px;line-height:18px;font-weight:400;color:#3a3a3a;font-family:'Liberation Mono', monospace;right:682.5px;">265,000.00</div>
<div class="t" style="top:391.88px;font-size:13.6px;line-height:18px;font-weight:400;color:#3a3a3a;font-family:'Liberation Mono', monospace;right:542.5px;">35,000.00</div>
<div class="t" style="top:391.88px;font-size:13.6px;line-height:18px;font-weight:400;color:#3a3a3a;font-family:'Liberation Mono', monospace;right:282.5px;">0.00</div>
<div class="t" style="top:390.89px;font-size:13.3px;line-height:17px;font-weight:400;color:#3a3a3a;font-family:'Liberation Sans', sans-serif;left:1396px;">13%</div>
<div class="b" style="left:74px;top:419px;width:1840px;height:35px;background:#fbf9fc"></div>
<div class="b" style="left:74px;top:454px;width:1840px;height:1px;background:#dedde2"></div>
<div class="b" style="left:143px;top:426px;width:20px;height:20px;background:#8cc895;border-radius:50%"></div>
<div class="t" style="top:428.36px;font-size:10.5px;line-height:14px;font-weight:700;color:#eaf6ec;font-family:'Liberation Sans', sans-serif;left:-147px;width:600px;text-align:center;">P</div>
<div class="t" style="top:426.15px;font-size:14px;line-height:18px;font-weight:400;color:#333;font-family:'Liberation Sans', sans-serif;left:175px;">Progress Claim 02</div>
<div class="b" style="left:377.3px;top:435.2px;width:3.2px;height:3.2px;background:#707070;border-radius:50%"></div>
<div class="b" style="left:382.3px;top:435.2px;width:3.2px;height:3.2px;background:#707070;border-radius:50%"></div>
<div class="b" style="left:387.3px;top:435.2px;width:3.2px;height:3.2px;background:#707070;border-radius:50%"></div>
<div class="t" style="top:427.15px;font-size:14px;line-height:18px;font-weight:400;color:#333;font-family:'Liberation Sans', sans-serif;left:193.5px;width:600px;text-align:center;">May 2023</div>
<div class="t" style="top:427.15px;font-size:14px;line-height:18px;font-weight:400;color:#333;font-family:'Liberation Sans', sans-serif;left:318.5px;width:600px;text-align:center;">Jun 2023</div>
<div class="b" style="left:723px;top:425px;width:61px;height:24px;border:1px solid #6a9e74;border-radius:12px;box-sizing:border-box;background:#f9fbf9"></div>
<div class="b" style="left:726px;top:428px;width:18px;height:18px;background:#2d7a3a;border-radius:50%"></div>
<div class="t" style="top:430.36px;font-size:10.5px;line-height:14px;font-weight:700;color:#d8eedc;font-family:'Liberation Sans', sans-serif;left:435px;width:600px;text-align:center;">P</div>
<div class="t" style="top:427.99px;font-size:13px;line-height:17px;font-weight:400;color:#4f8463;font-family:'Liberation Sans', sans-serif;left:749px;">Paid</div>
<div class="t" style="top:426.65px;font-size:14px;line-height:18px;font-weight:400;color:#2a69a6;font-family:'Liberation Sans', sans-serif;-webkit-text-stroke:0.35px #2a69a6;left:1564.5px;width:600px;text-align:center;">0</div>
<div class="t" style="top:427.88px;font-size:13.6px;line-height:18px;font-weight:400;color:#3a3a3a;font-family:'Liberation Mono', monospace;right:964.5px;">25,000.00</div>
<div class="t" style="top:427.88px;font-size:13.6px;line-height:18px;font-weight:400;color:#3a3a3a;font-family:'Liberation Mono', monospace;right:822.5px;">25,000.00</div>
<div class="t" style="top:427.88px;font-size:13.6px;line-height:18px;font-weight:400;color:#3a3a3a;font-family:'Liberation Mono', monospace;right:682.5px;">265,000.00</div>
<div class="t" style="top:427.88px;font-size:13.6px;line-height:18px;font-weight:400;color:#3a3a3a;font-family:'Liberation Mono', monospace;right:542.5px;">60,000.00</div>
<div class="t" style="top:427.88px;font-size:13.6px;line-height:18px;font-weight:400;color:#3a3a3a;font-family:'Liberation Mono', monospace;right:282.5px;">35,000.00</div>
<div class="t" style="top:426.89px;font-size:13.3px;line-height:17px;font-weight:400;color:#3a3a3a;font-family:'Liberation Sans', sans-serif;left:1396px;">23%</div>
<div class="b" style="left:74px;top:455px;width:1840px;height:35px;background:#f5f4f7"></div>
<div class="b" style="left:74px;top:490px;width:1840px;height:1px;background:#dedde2"></div>
<div class="b" style="left:143px;top:462px;width:20px;height:20px;background:#8cc895;border-radius:50%"></div>
<div class="t" style="top:464.36px;font-size:10.5px;line-height:14px;font-weight:700;color:#eaf6ec;font-family:'Liberation Sans', sans-serif;left:-147px;width:600px;text-align:center;">P</div>
<div class="t" style="top:462.15px;font-size:14px;line-height:18px;font-weight:400;color:#333;font-family:'Liberation Sans', sans-serif;left:175px;">Progress Claim 03</div>
<div class="b" style="left:377.3px;top:471.2px;width:3.2px;height:3.2px;background:#707070;border-radius:50%"></div>
<div class="b" style="left:382.3px;top:471.2px;width:3.2px;height:3.2px;background:#707070;border-radius:50%"></div>
<div class="b" style="left:387.3px;top:471.2px;width:3.2px;height:3.2px;background:#707070;border-radius:50%"></div>
<div class="t" style="top:463.15px;font-size:14px;line-height:18px;font-weight:400;color:#333;font-family:'Liberation Sans', sans-serif;left:193.5px;width:600px;text-align:center;">Jun 2023</div>
<div class="t" style="top:463.15px;font-size:14px;line-height:18px;font-weight:400;color:#333;font-family:'Liberation Sans', sans-serif;left:318.5px;width:600px;text-align:center;">Jul 2023</div>
<div class="b" style="left:723px;top:461px;width:61px;height:24px;border:1px solid #6a9e74;border-radius:12px;box-sizing:border-box;background:#f9fbf9"></div>
<div class="b" style="left:726px;top:464px;width:18px;height:18px;background:#2d7a3a;border-radius:50%"></div>
<div class="t" style="top:466.36px;font-size:10.5px;line-height:14px;font-weight:700;color:#d8eedc;font-family:'Liberation Sans', sans-serif;left:435px;width:600px;text-align:center;">P</div>
<div class="t" style="top:463.99px;font-size:13px;line-height:17px;font-weight:400;color:#4f8463;font-family:'Liberation Sans', sans-serif;left:749px;">Paid</div>
<div class="t" style="top:462.65px;font-size:14px;line-height:18px;font-weight:400;color:#2a69a6;font-family:'Liberation Sans', sans-serif;-webkit-text-stroke:0.35px #2a69a6;left:1564.5px;width:600px;text-align:center;">0</div>
<div class="t" style="top:463.88px;font-size:13.6px;line-height:18px;font-weight:400;color:#3a3a3a;font-family:'Liberation Mono', monospace;right:964.5px;">50,000.00</div>
<div class="t" style="top:463.88px;font-size:13.6px;line-height:18px;font-weight:400;color:#3a3a3a;font-family:'Liberation Mono', monospace;right:822.5px;">50,000.00</div>
<div class="t" style="top:463.88px;font-size:13.6px;line-height:18px;font-weight:400;color:#3a3a3a;font-family:'Liberation Mono', monospace;right:682.5px;">265,000.00</div>
<div class="t" style="top:463.88px;font-size:13.6px;line-height:18px;font-weight:400;color:#3a3a3a;font-family:'Liberation Mono', monospace;right:542.5px;">110,000.00</div>
<div class="t" style="top:463.88px;font-size:13.6px;line-height:18px;font-weight:400;color:#3a3a3a;font-family:'Liberation Mono', monospace;right:282.5px;">60,000.00</div>
<div class="t" style="top:462.89px;font-size:13.3px;line-height:17px;font-weight:400;color:#3a3a3a;font-family:'Liberation Sans', sans-serif;left:1396px;">42%</div>
<div class="b" style="left:74px;top:491px;width:1840px;height:35px;background:#fbf9fc"></div>
<div class="b" style="left:74px;top:526px;width:1840px;height:1px;background:#dedde2"></div>
<div class="b" style="left:143px;top:498px;width:20px;height:20px;background:#8cc895;border-radius:50%"></div>
<div class="t" style="top:500.36px;font-size:10.5px;line-height:14px;font-weight:700;color:#eaf6ec;font-family:'Liberation Sans', sans-serif;left:-147px;width:600px;text-align:center;">P</div>
<div class="t" style="top:498.15px;font-size:14px;line-height:18px;font-weight:400;color:#333;font-family:'Liberation Sans', sans-serif;left:175px;">Progress Claim 04</div>
<div class="b" style="left:377.3px;top:507.2px;width:3.2px;height:3.2px;background:#707070;border-radius:50%"></div>
<div class="b" style="left:382.3px;top:507.2px;width:3.2px;height:3.2px;background:#707070;border-radius:50%"></div>
<div class="b" style="left:387.3px;top:507.2px;width:3.2px;height:3.2px;background:#707070;border-radius:50%"></div>
<div class="t" style="top:499.15px;font-size:14px;line-height:18px;font-weight:400;color:#333;font-family:'Liberation Sans', sans-serif;left:193.5px;width:600px;text-align:center;">Jul 2023</div>
<div class="t" style="top:499.15px;font-size:14px;line-height:18px;font-weight:400;color:#333;font-family:'Liberation Sans', sans-serif;left:318.5px;width:600px;text-align:center;">Aug 2023</div>
<div class="b" style="left:723px;top:497px;width:61px;height:24px;border:1px solid #6a9e74;border-radius:12px;box-sizing:border-box;background:#f9fbf9"></div>
<div class="b" style="left:726px;top:500px;width:18px;height:18px;background:#2d7a3a;border-radius:50%"></div>
<div class="t" style="top:502.36px;font-size:10.5px;line-height:14px;font-weight:700;color:#d8eedc;font-family:'Liberation Sans', sans-serif;left:435px;width:600px;text-align:center;">P</div>
<div class="t" style="top:499.99px;font-size:13px;line-height:17px;font-weight:400;color:#4f8463;font-family:'Liberation Sans', sans-serif;left:749px;">Paid</div>
<div class="t" style="top:498.65px;font-size:14px;line-height:18px;font-weight:400;color:#2a69a6;font-family:'Liberation Sans', sans-serif;-webkit-text-stroke:0.35px #2a69a6;left:1564.5px;width:600px;text-align:center;">0</div>
<div class="t" style="top:499.88px;font-size:13.6px;line-height:18px;font-weight:400;color:#3a3a3a;font-family:'Liberation Mono', monospace;right:964.5px;">40,000.00</div>
<div class="t" style="top:499.88px;font-size:13.6px;line-height:18px;font-weight:400;color:#3a3a3a;font-family:'Liberation Mono', monospace;right:822.5px;">40,000.00</div>
<div class="t" style="top:499.88px;font-size:13.6px;line-height:18px;font-weight:400;color:#3a3a3a;font-family:'Liberation Mono', monospace;right:682.5px;">165,000.00</div>
<div class="t" style="top:499.88px;font-size:13.6px;line-height:18px;font-weight:400;color:#3a3a3a;font-family:'Liberation Mono', monospace;right:542.5px;">150,000.00</div>
<div class="t" style="top:499.88px;font-size:13.6px;line-height:18px;font-weight:400;color:#3a3a3a;font-family:'Liberation Mono', monospace;right:282.5px;">110,000.00</div>
<div class="t" style="top:498.89px;font-size:13.3px;line-height:17px;font-weight:400;color:#3a3a3a;font-family:'Liberation Sans', sans-serif;left:1396px;">91%</div>
<div class="b" style="left:74px;top:527px;width:1840px;height:35px;background:#f5f4f7"></div>
<div class="b" style="left:74px;top:562px;width:1840px;height:1px;background:#dedde2"></div>
<div class="b" style="left:143px;top:534px;width:20px;height:20px;background:#8cc895;border-radius:50%"></div>
<div class="t" style="top:536.36px;font-size:10.5px;line-height:14px;font-weight:700;color:#eaf6ec;font-family:'Liberation Sans', sans-serif;left:-147px;width:600px;text-align:center;">P</div>
<div class="t" style="top:534.15px;font-size:14px;line-height:18px;font-weight:400;color:#333;font-family:'Liberation Sans', sans-serif;left:175px;">Progress Claim 05</div>
<div class="b" style="left:377.3px;top:543.2px;width:3.2px;height:3.2px;background:#707070;border-radius:50%"></div>
<div class="b" style="left:382.3px;top:543.2px;width:3.2px;height:3.2px;background:#707070;border-radius:50%"></div>
<div class="b" style="left:387.3px;top:543.2px;width:3.2px;height:3.2px;background:#707070;border-radius:50%"></div>
<div class="t" style="top:535.15px;font-size:14px;line-height:18px;font-weight:400;color:#333;font-family:'Liberation Sans', sans-serif;left:193.5px;width:600px;text-align:center;">Aug 2023</div>
<div class="t" style="top:535.15px;font-size:14px;line-height:18px;font-weight:400;color:#333;font-family:'Liberation Sans', sans-serif;left:318.5px;width:600px;text-align:center;">Sep 2023</div>
<div class="b" style="left:723px;top:533px;width:61px;height:24px;border:1px solid #6a9e74;border-radius:12px;box-sizing:border-box;background:#f9fbf9"></div>
<div class="b" style="left:726px;top:536px;width:18px;height:18px;background:#2d7a3a;border-radius:50%"></div>
<div class="t" style="top:538.36px;font-size:10.5px;line-height:14px;font-weight:700;color:#d8eedc;font-family:'Liberation Sans', sans-serif;left:435px;width:600px;text-align:center;">P</div>
<div class="t" style="top:535.99px;font-size:13px;line-height:17px;font-weight:400;color:#4f8463;font-family:'Liberation Sans', sans-serif;left:749px;">Paid</div>
<div class="t" style="top:534.65px;font-size:14px;line-height:18px;font-weight:400;color:#2a69a6;font-family:'Liberation Sans', sans-serif;-webkit-text-stroke:0.35px #2a69a6;left:1564.5px;width:600px;text-align:center;">0</div>
<div class="t" style="top:535.88px;font-size:13.6px;line-height:18px;font-weight:400;color:#3a3a3a;font-family:'Liberation Mono', monospace;right:964.5px;">20,000.00</div>
<div class="t" style="top:535.88px;font-size:13.6px;line-height:18px;font-weight:400;color:#3a3a3a;font-family:'Liberation Mono', monospace;right:822.5px;">20,000.00</div>
<div class="t" style="top:535.88px;font-size:13.6px;line-height:18px;font-weight:400;color:#3a3a3a;font-family:'Liberation Mono', monospace;right:682.5px;">265,000.00</div>
<div class="t" style="top:535.88px;font-size:13.6px;line-height:18px;font-weight:400;color:#3a3a3a;font-family:'Liberation Mono', monospace;right:542.5px;">170,000.00</div>
<div class="t" style="top:535.88px;font-size:13.6px;line-height:18px;font-weight:400;color:#3a3a3a;font-family:'Liberation Mono', monospace;right:282.5px;">150,000.00</div>
<div class="t" style="top:534.89px;font-size:13.3px;line-height:17px;font-weight:400;color:#3a3a3a;font-family:'Liberation Sans', sans-serif;left:1396px;">64%</div>
<div class="b" style="left:74px;top:563px;width:1840px;height:35px;background:#fbf9fc"></div>
<div class="b" style="left:74px;top:598px;width:1840px;height:1px;background:#dedde2"></div>
<div class="b" style="left:143px;top:570px;width:20px;height:20px;background:#8cc895;border-radius:50%"></div>
<div class="t" style="top:572.36px;font-size:10.5px;line-height:14px;font-weight:700;color:#eaf6ec;font-family:'Liberation Sans', sans-serif;left:-147px;width:600px;text-align:center;">P</div>
<div class="t" style="top:570.15px;font-size:14px;line-height:18px;font-weight:400;color:#333;font-family:'Liberation Sans', sans-serif;left:175px;">Progress Claim 06</div>
<div class="b" style="left:377.3px;top:579.2px;width:3.2px;height:3.2px;background:#707070;border-radius:50%"></div>
<div class="b" style="left:382.3px;top:579.2px;width:3.2px;height:3.2px;background:#707070;border-radius:50%"></div>
<div class="b" style="left:387.3px;top:579.2px;width:3.2px;height:3.2px;background:#707070;border-radius:50%"></div>
<div class="t" style="top:571.15px;font-size:14px;line-height:18px;font-weight:400;color:#333;font-family:'Liberation Sans', sans-serif;left:193.5px;width:600px;text-align:center;">Sep 2023</div>
<div class="t" style="top:571.15px;font-size:14px;line-height:18px;font-weight:400;color:#333;font-family:'Liberation Sans', sans-serif;left:318.5px;width:600px;text-align:center;">Oct 2023</div>
<div class="b" style="left:723px;top:569px;width:61px;height:24px;border:1px solid #6a9e74;border-radius:12px;box-sizing:border-box;background:#f9fbf9"></div>
<div class="b" style="left:726px;top:572px;width:18px;height:18px;background:#2d7a3a;border-radius:50%"></div>
<div class="t" style="top:574.36px;font-size:10.5px;line-height:14px;font-weight:700;color:#d8eedc;font-family:'Liberation Sans', sans-serif;left:435px;width:600px;text-align:center;">P</div>
<div class="t" style="top:571.99px;font-size:13px;line-height:17px;font-weight:400;color:#4f8463;font-family:'Liberation Sans', sans-serif;left:749px;">Paid</div>
<div class="t" style="top:570.65px;font-size:14px;line-height:18px;font-weight:400;color:#2a69a6;font-family:'Liberation Sans', sans-serif;-webkit-text-stroke:0.35px #2a69a6;left:1564.5px;width:600px;text-align:center;">0</div>
<div class="t" style="top:571.88px;font-size:13.6px;line-height:18px;font-weight:400;color:#3a3a3a;font-family:'Liberation Mono', monospace;right:964.5px;">11,000.00</div>
<div class="t" style="top:571.88px;font-size:13.6px;line-height:18px;font-weight:400;color:#3a3a3a;font-family:'Liberation Mono', monospace;right:822.5px;">11,000.00</div>
<div class="t" style="top:571.88px;font-size:13.6px;line-height:18px;font-weight:400;color:#3a3a3a;font-family:'Liberation Mono', monospace;right:682.5px;">265,000.00</div>
<div class="t" style="top:571.88px;font-size:13.6px;line-height:18px;font-weight:400;color:#3a3a3a;font-family:'Liberation Mono', monospace;right:542.5px;">181,000.00</div>
<div class="t" style="top:571.88px;font-size:13.6px;line-height:18px;font-weight:400;color:#3a3a3a;font-family:'Liberation Mono', monospace;right:282.5px;">170,000.00</div>
<div class="t" style="top:570.89px;font-size:13.3px;line-height:17px;font-weight:400;color:#3a3a3a;font-family:'Liberation Sans', sans-serif;left:1396px;">68%</div>
<div class="b" style="left:74px;top:599px;width:1840px;height:35px;background:#f5f4f7"></div>
<div class="b" style="left:74px;top:634px;width:1840px;height:1px;background:#dedde2"></div>
<div class="b" style="left:143px;top:606px;width:20px;height:20px;background:#8cc895;border-radius:50%"></div>
<div class="t" style="top:608.36px;font-size:10.5px;line-height:14px;font-weight:700;color:#eaf6ec;font-family:'Liberation Sans', sans-serif;left:-147px;width:600px;text-align:center;">P</div>
<div class="t" style="top:606.15px;font-size:14px;line-height:18px;font-weight:400;color:#333;font-family:'Liberation Sans', sans-serif;left:175px;">Progress Claim 07</div>
<div class="b" style="left:377.3px;top:615.2px;width:3.2px;height:3.2px;background:#707070;border-radius:50%"></div>
<div class="b" style="left:382.3px;top:615.2px;width:3.2px;height:3.2px;background:#707070;border-radius:50%"></div>
<div class="b" style="left:387.3px;top:615.2px;width:3.2px;height:3.2px;background:#707070;border-radius:50%"></div>
<div class="t" style="top:607.15px;font-size:14px;line-height:18px;font-weight:400;color:#333;font-family:'Liberation Sans', sans-serif;left:193.5px;width:600px;text-align:center;">Oct 2023</div>
<div class="t" style="top:607.15px;font-size:14px;line-height:18px;font-weight:400;color:#333;font-family:'Liberation Sans', sans-serif;left:318.5px;width:600px;text-align:center;">Dec 2023</div>
<div class="b" style="left:708px;top:605px;width:91px;height:24px;border:1px solid #5a8cc2;border-radius:12px;box-sizing:border-box;background:#f8fafd"></div>
<div class="b" style="left:711px;top:608px;width:18px;height:18px;background:#1f78c9;border-radius:50%"></div>
<div class="t" style="top:610.36px;font-size:10.5px;line-height:14px;font-weight:700;color:#e0eefa;font-family:'Liberation Sans', sans-serif;left:420px;width:600px;text-align:center;">A</div>
<div class="t" style="top:607.99px;font-size:13px;line-height:17px;font-weight:400;color:#3174b4;font-family:'Liberation Sans', sans-serif;left:734px;">Approved</div>
<div class="t" style="top:606.65px;font-size:14px;line-height:18px;font-weight:400;color:#2a69a6;font-family:'Liberation Sans', sans-serif;-webkit-text-stroke:0.35px #2a69a6;left:1564.5px;width:600px;text-align:center;">0</div>
<div class="t" style="top:607.88px;font-size:13.6px;line-height:18px;font-weight:400;color:#3a3a3a;font-family:'Liberation Mono', monospace;right:964.5px;">129,999.00</div>
<div class="t" style="top:607.88px;font-size:13.6px;line-height:18px;font-weight:400;color:#3a3a3a;font-family:'Liberation Mono', monospace;right:822.5px;">129,999.00</div>
<div class="t" style="top:607.88px;font-size:13.6px;line-height:18px;font-weight:400;color:#3a3a3a;font-family:'Liberation Mono', monospace;right:682.5px;">364,999.00</div>
<div class="t" style="top:607.88px;font-size:13.6px;line-height:18px;font-weight:400;color:#3a3a3a;font-family:'Liberation Mono', monospace;right:542.5px;">310,999.00</div>
<div class="t" style="top:607.88px;font-size:13.6px;line-height:18px;font-weight:400;color:#3a3a3a;font-family:'Liberation Mono', monospace;right:282.5px;">181,000.00</div>
<div class="t" style="top:606.89px;font-size:13.3px;line-height:17px;font-weight:400;color:#3a3a3a;font-family:'Liberation Sans', sans-serif;left:1396px;">85%</div>
<div class="b" style="left:74px;top:635px;width:1840px;height:35px;background:#fbf9fc"></div>
<div class="b" style="left:74px;top:670px;width:1840px;height:1px;background:#dedde2"></div>
<svg class="b" style="left:95px;top:649px" width="12" height="9" viewBox="0 0 12 9"><path d="M1 1.5 L6 6.5 L11 1.5" stroke="#666" stroke-width="1.9" fill="none"/></svg>
<div class="b" style="left:119px;top:642px;width:20px;height:20px;background:#2b6dbf;border-radius:50%"></div>
<div class="t" style="top:644.36px;font-size:10.5px;line-height:14px;font-weight:700;color:#eef3fb;font-family:'Liberation Sans', sans-serif;left:-171px;width:600px;text-align:center;">C</div>
<div class="t" style="top:642.15px;font-size:14px;line-height:18px;font-weight:400;color:#333;font-family:'Liberation Sans', sans-serif;left:151px;">Head Contractor</div>
<div class="t" style="top:642.15px;font-size:14px;line-height:18px;font-weight:400;color:#333;font-family:'Liberation Sans', sans-serif;left:261.216796875px;">(2)</div>
<div class="t" style="top:643.88px;font-size:13.6px;line-height:18px;font-weight:400;color:#3a3a3a;font-family:'Liberation Mono', monospace;right:964.5px;">390,000.00</div>
<div class="t" style="top:643.88px;font-size:13.6px;line-height:18px;font-weight:400;color:#3a3a3a;font-family:'Liberation Mono', monospace;right:822.5px;">425,000.00</div>
<div class="t" style="top:643.88px;font-size:13.6px;line-height:18px;font-weight:400;color:#3a3a3a;font-family:'Liberation Mono', monospace;right:682.5px;">860,000.00</div>
<div class="t" style="top:643.88px;font-size:13.6px;line-height:18px;font-weight:400;color:#3a3a3a;font-family:'Liberation Mono', monospace;right:542.5px;">390,000.00</div>
<div class="t" style="top:643.88px;font-size:13.6px;line-height:18px;font-weight:400;color:#3a3a3a;font-family:'Liberation Mono', monospace;right:282.5px;">110,000.00</div>
<div class="t" style="top:642.89px;font-size:13.3px;line-height:17px;font-weight:400;color:#3a3a3a;font-family:'Liberation Sans', sans-serif;left:1396px;">45%</div>
<div class="b" style="left:74px;top:671px;width:1840px;height:35px;background:#f5f4f7"></div>
<div class="b" style="left:74px;top:706px;width:1840px;height:1px;background:#dedde2"></div>
<div class="b" style="left:143px;top:678px;width:20px;height:20px;background:#8cc895;border-radius:50%"></div>
<div class="t" style="top:680.36px;font-size:10.5px;line-height:14px;font-weight:700;color:#eaf6ec;font-family:'Liberation Sans', sans-serif;left:-147px;width:600px;text-align:center;">P</div>
<div class="t" style="top:678.15px;font-size:14px;line-height:18px;font-weight:400;color:#333;font-family:'Liberation Sans', sans-serif;left:175px;">Progress Claim 01</div>
<div class="b" style="left:377.3px;top:687.2px;width:3.2px;height:3.2px;background:#707070;border-radius:50%"></div>
<div class="b" style="left:382.3px;top:687.2px;width:3.2px;height:3.2px;background:#707070;border-radius:50%"></div>
<div class="b" style="left:387.3px;top:687.2px;width:3.2px;height:3.2px;background:#707070;border-radius:50%"></div>
<div class="t" style="top:679.15px;font-size:14px;line-height:18px;font-weight:400;color:#333;font-family:'Liberation Sans', sans-serif;left:193.5px;width:600px;text-align:center;">Jun 2024</div>
<div class="t" style="top:679.15px;font-size:14px;line-height:18px;font-weight:400;color:#333;font-family:'Liberation Sans', sans-serif;left:318.5px;width:600px;text-align:center;">Jun 2024</div>
<div class="b" style="left:723px;top:677px;width:61px;height:24px;border:1px solid #6a9e74;border-radius:12px;box-sizing:border-box;background:#f9fbf9"></div>
<div class="b" style="left:726px;top:680px;width:18px;height:18px;background:#2d7a3a;border-radius:50%"></div>
<div class="t" style="top:682.36px;font-size:10.5px;line-height:14px;font-weight:700;color:#d8eedc;font-family:'Liberation Sans', sans-serif;left:435px;width:600px;text-align:center;">P</div>
<div class="t" style="top:679.99px;font-size:13px;line-height:17px;font-weight:400;color:#4f8463;font-family:'Liberation Sans', sans-serif;left:749px;">Paid</div>
<div class="t" style="top:678.65px;font-size:14px;line-height:18px;font-weight:400;color:#2a69a6;font-family:'Liberation Sans', sans-serif;-webkit-text-stroke:0.35px #2a69a6;left:1564.5px;width:600px;text-align:center;">0</div>
<div class="t" style="top:679.88px;font-size:13.6px;line-height:18px;font-weight:400;color:#3a3a3a;font-family:'Liberation Mono', monospace;right:964.5px;">110,000.00</div>
<div class="t" style="top:679.88px;font-size:13.6px;line-height:18px;font-weight:400;color:#3a3a3a;font-family:'Liberation Mono', monospace;right:822.5px;">120,000.00</div>
<div class="t" style="top:679.88px;font-size:13.6px;line-height:18px;font-weight:400;color:#3a3a3a;font-family:'Liberation Mono', monospace;right:682.5px;">700,000.00</div>
<div class="t" style="top:679.88px;font-size:13.6px;line-height:18px;font-weight:400;color:#3a3a3a;font-family:'Liberation Mono', monospace;right:542.5px;">110,000.00</div>
<div class="t" style="top:679.88px;font-size:13.6px;line-height:18px;font-weight:400;color:#3a3a3a;font-family:'Liberation Mono', monospace;right:282.5px;">0.00</div>
<div class="t" style="top:678.89px;font-size:13.3px;line-height:17px;font-weight:400;color:#3a3a3a;font-family:'Liberation Sans', sans-serif;left:1396px;">16%</div>
<div class="b" style="left:74px;top:707px;width:1840px;height:35px;background:#fbf9fc"></div>
<div class="b" style="left:74px;top:742px;width:1840px;height:1px;background:#dedde2"></div>
<div class="b" style="left:143px;top:714px;width:20px;height:20px;background:#8cc895;border-radius:50%"></div>
<div class="t" style="top:716.36px;font-size:10.5px;line-height:14px;font-weight:700;color:#eaf6ec;font-family:'Liberation Sans', sans-serif;left:-147px;width:600px;text-align:center;">P</div>
<div class="t" style="top:714.15px;font-size:14px;line-height:18px;font-weight:400;color:#333;font-family:'Liberation Sans', sans-serif;left:175px;">Progress Claim 02</div>
<div class="b" style="left:377.3px;top:723.2px;width:3.2px;height:3.2px;background:#707070;border-radius:50%"></div>
<div class="b" style="left:382.3px;top:723.2px;width:3.2px;height:3.2px;background:#707070;border-radius:50%"></div>
<div class="b" style="left:387.3px;top:723.2px;width:3.2px;height:3.2px;background:#707070;border-radius:50%"></div>
<div class="t" style="top:715.15px;font-size:14px;line-height:18px;font-weight:400;color:#333;font-family:'Liberation Sans', sans-serif;left:193.5px;width:600px;text-align:center;">Jun 2024</div>
<div class="b" style="left:708px;top:713px;width:91px;height:24px;border:1px solid #5a8cc2;border-radius:12px;box-sizing:border-box;background:#f8fafd"></div>
<div class="b" style="left:711px;top:716px;width:18px;height:18px;background:#1f78c9;border-radius:50%"></div>
<div class="t" style="top:718.36px;font-size:10.5px;line-height:14px;font-weight:700;color:#e0eefa;font-family:'Liberation Sans', sans-serif;left:420px;width:600px;text-align:center;">A</div>
<div class="t" style="top:715.99px;font-size:13px;line-height:17px;font-weight:400;color:#3174b4;font-family:'Liberation Sans', sans-serif;left:734px;">Approved</div>
<div class="t" style="top:714.65px;font-size:14px;line-height:18px;font-weight:400;color:#2a69a6;font-family:'Liberation Sans', sans-serif;-webkit-text-stroke:0.35px #2a69a6;left:1564.5px;width:600px;text-align:center;">0</div>
<div class="t" style="top:715.88px;font-size:13.6px;line-height:18px;font-weight:400;color:#3a3a3a;font-family:'Liberation Mono', monospace;right:964.5px;">280,000.00</div>
<div class="t" style="top:715.88px;font-size:13.6px;line-height:18px;font-weight:400;color:#3a3a3a;font-family:'Liberation Mono', monospace;right:822.5px;">305,000.00</div>
<div class="t" style="top:715.88px;font-size:13.6px;line-height:18px;font-weight:400;color:#3a3a3a;font-family:'Liberation Mono', monospace;right:682.5px;">860,000.00</div>
<div class="t" style="top:715.88px;font-size:13.6px;line-height:18px;font-weight:400;color:#3a3a3a;font-family:'Liberation Mono', monospace;right:542.5px;">390,000.00</div>
<div class="t" style="top:715.88px;font-size:13.6px;line-height:18px;font-weight:400;color:#3a3a3a;font-family:'Liberation Mono', monospace;right:282.5px;">110,000.00</div>
<div class="t" style="top:714.89px;font-size:13.3px;line-height:17px;font-weight:400;color:#3a3a3a;font-family:'Liberation Sans', sans-serif;left:1396px;">45%</div>
<div class="b" style="left:74px;top:310px;width:260px;height:36px;border:1px solid #8ea4c2;box-sizing:border-box"></div>
<div class="b" style="left:1814px;top:163px;width:1px;height:593px;background:#dedde2"></div>
<div class="b" style="left:74px;top:895px;width:1840px;height:1px;background:#dedde2"></div>
<div class="t" style="top:911.65px;font-size:14px;line-height:18px;font-weight:400;color:#333;font-family:'Liberation Sans', sans-serif;right:30px;">Total Rows: 6</div>
</body></html>
